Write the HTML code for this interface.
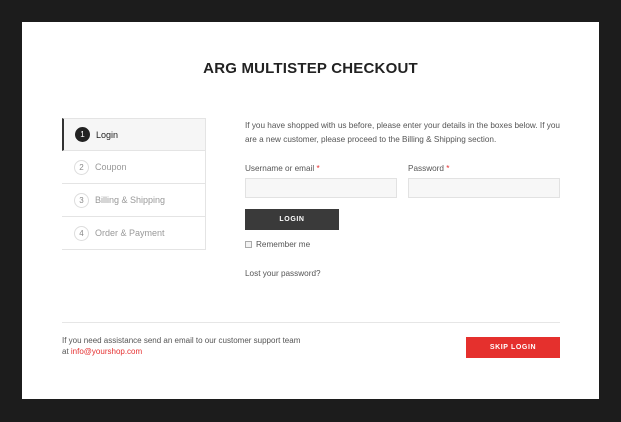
<!DOCTYPE html>
<html><head><style>
*{margin:0;padding:0;box-sizing:border-box}
body{width:621px;height:422px;background:#1c1c1c;font-family:"Liberation Sans",sans-serif;position:relative;overflow:hidden}
.p{position:absolute;left:22px;top:22px;width:577px;height:377px;background:#fff}
.a{position:absolute}
h1{position:absolute;left:0;width:621px;top:60px;text-align:center;font-size:15px;font-weight:bold;color:#222;letter-spacing:0.2px}
.tab{position:absolute;left:62px;width:144px;height:33px;border-right:1px solid #e4e4e4;border-bottom:1px solid #e4e4e4;font-size:9px;color:#999;display:flex;align-items:center;padding-left:12px}
.c{width:15px;height:15px;border-radius:50%;border:1px solid #ddd;display:inline-flex;align-items:center;justify-content:center;font-size:8px;margin-right:6px;color:#888}
.t{font-size:8.2px;color:#555;line-height:14px}
.in{position:absolute;height:20px;background:#f7f7f7;border:1px solid #e2e2e2}
.btn{position:absolute;color:#fff;font-size:7px;font-weight:bold;letter-spacing:.6px;display:flex;align-items:center;justify-content:center}
</style></head><body>
<div class="p"></div>
<h1>ARG MULTISTEP CHECKOUT</h1>
<div class="tab" style="top:118px;height:33px;border-top:1px solid #e4e4e4;background:#f6f6f6;border-left:2px solid #333;color:#222;padding-left:11px"><span class="c" style="background:#222;border-color:#222;color:#fff">1</span>Login</div>
<div class="tab" style="top:151px"><span class="c">2</span>Coupon</div>
<div class="tab" style="top:184px"><span class="c">3</span>Billing &amp; Shipping</div>
<div class="tab" style="top:217px"><span class="c">4</span>Order &amp; Payment</div>
<div class="a t" style="left:245px;top:119px;width:318px">If you have shopped with us before, please enter your details in the boxes below. If you are a new customer, please proceed to the Billing &amp; Shipping section.</div>
<div class="a t" style="left:245px;top:162px">Username or email <span style="color:#e53030">*</span></div>
<div class="a t" style="left:408px;top:162px">Password <span style="color:#e53030">*</span></div>
<div class="in" style="left:245px;top:178px;width:152px"></div>
<div class="in" style="left:408px;top:178px;width:152px"></div>
<div class="btn" style="left:245px;top:209px;width:94px;height:21px;background:#3a3a3a">LOGIN</div>
<div class="a" style="left:245px;top:241px;width:7px;height:7px;border:1px solid #aaa;background:#f3f3f3"></div>
<div class="a t" style="left:256px;top:238px">Remember me</div>
<div class="a t" style="left:245px;top:267px">Lost your password?</div>
<div class="a" style="left:62px;top:322px;width:498px;height:1px;background:#e6e6e6"></div>
<div class="a t" style="left:62px;top:335px;line-height:11px;font-size:8px">If you need assistance send an email to our customer support team<br>at <span style="color:#e53030">info@yourshop.com</span></div>
<div class="btn" style="left:466px;top:337px;width:94px;height:21px;background:#e5302d">SKIP LOGIN</div>
</body></html>
